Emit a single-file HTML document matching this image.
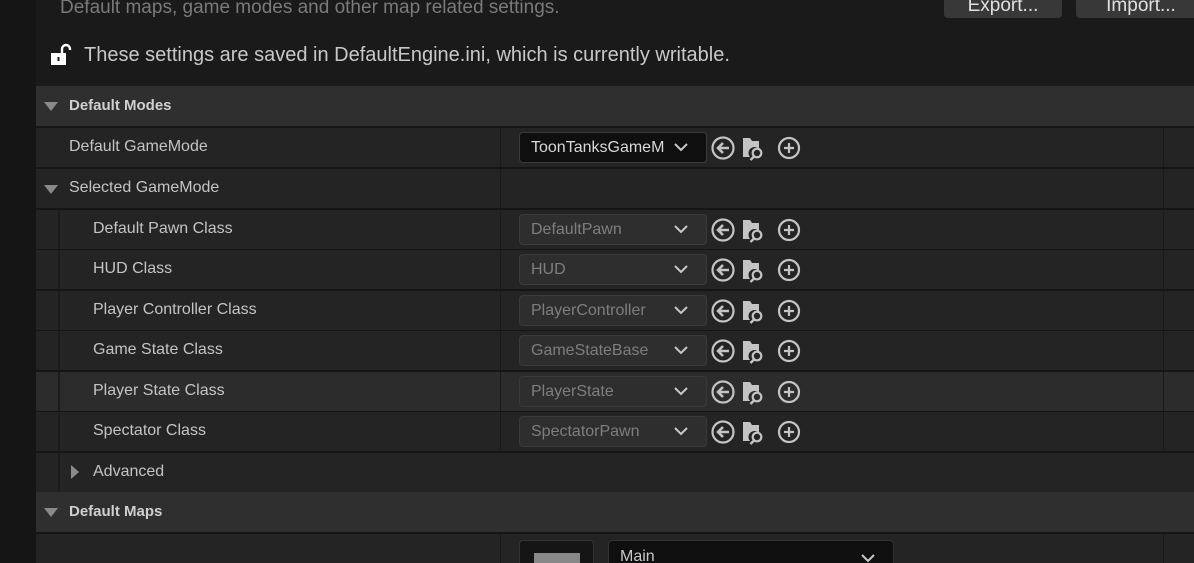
<!DOCTYPE html>
<html><head><style>
*{margin:0;padding:0;box-sizing:border-box}
html,body{width:1194px;height:563px;overflow:hidden}
body{background:#151515;font-family:"Liberation Sans",sans-serif;position:relative;color:#c0c0c0}
.a{position:absolute}
.top{left:36px;top:0;width:1158px;height:86px;background:#1a1a1a}
.hdr{left:36px;width:1158px;height:40px;background:#2f2f2f;font-weight:bold;font-size:15px;color:#d0d0d0}
.row{left:36px;width:1158px;height:39px;background:#242424;overflow:hidden}
.lbl{position:absolute;top:11px;font-size:16px;color:#c4c4c4}
.tri{position:absolute;left:8px;top:16px;width:0;height:0;border-left:7px solid transparent;border-right:7px solid transparent;border-top:9px solid #8a8a8a}
.vd{position:absolute;left:464px;top:0;width:1px;height:100%;background:#1a1a1a}
.vd2{position:absolute;left:1127px;top:0;width:1px;height:100%;background:#1a1a1a}
.ind{position:absolute;left:0;top:0;width:24px;height:100%;background:#242424;border-right:2px solid #1c1c1c}
.dd{position:absolute;left:483px;top:4px;width:188px;height:31px;border-radius:4px;background:#2e2e2e;border:1px solid #3a3a3a;font-size:16px;color:#7e7e7e;padding:6px 0 0 11px}
.dd.on{background:#0f0f0f;color:#d8d8d8;border-color:#3a3a3a}
.dd svg{position:absolute;right:18px;top:10px}
.ic{position:absolute;left:673px;top:6px}
</style></head><body>
<div class="a top">
 <div class="a" style="left:24px;top:-3px;font-size:19px;color:#7a7a7a">Default maps, game modes and other map related settings.</div>
 <div class="a" style="left:908px;top:-10px;width:118px;height:28px;background:#383838;border-radius:4px;color:#e0e0e0;font-size:19px;text-align:center;padding-top:5px">Export...</div>
 <div class="a" style="left:1040px;top:-10px;width:130px;height:28px;background:#383838;border-radius:4px;color:#e0e0e0;font-size:19px;text-align:center;padding-top:5px">Import...</div>
 <svg class="a" style="left:14px;top:43px" width="22" height="23" viewBox="0 0 22 23"><path d="M12 10V6a4 4 0 0 1 8 0v1" fill="none" stroke="#fff" stroke-width="2.4"/><rect x="1" y="10" width="15" height="12" fill="#fff"/><rect x="7.5" y="14" width="2" height="4" fill="#1a1a1a"/></svg>
 <div class="a" style="left:48px;top:44px;font-size:20px;color:#c8c8c8">These settings are saved in DefaultEngine.ini, which is currently writable.</div>
</div>

<svg width="0" height="0" style="position:absolute"><defs>
<g id="icons" fill="none" stroke="#c4c4c4" stroke-width="2.2">
<circle cx="14" cy="14" r="10.5"/><path d="M20 14H9M14 9l-5 5 5 5" stroke-width="2.6"/>
<path d="M34 4h7l2 3h7v8a6 6 0 0 0-9 8h-7z" fill="#c4c4c4" stroke="none"/><circle cx="48" cy="19" r="4.3" stroke-width="2.2"/><path d="M45 22.5L41.5 26" stroke-width="2.4"/>
<circle cx="80" cy="14" r="10"/><path d="M80 9v10M75 14h10"/>
</g>
<path id="chev" d="M1 1l6 6 6-6" fill="none" stroke="#c8c8c8" stroke-width="2"/>
</defs></svg>

<div class="a hdr" style="top:86px"><div class="tri"></div><div class="a" style="left:33px;top:11px">Default Modes</div></div>

<div class="a row" style="top:128px"><div class="lbl" style="left:33px;top:10px">Default GameMode</div><div class="vd"></div><div class="vd2"></div>
 <div class="dd on">ToonTanksGameM<svg width="14" height="9"><use href="#chev"/></svg></div>
 <svg class="ic" width="100" height="28"><use href="#icons"/></svg></div>

<div class="a row" style="top:169px"><div class="tri"></div><div class="lbl" style="left:33px;top:10px">Selected GameMode</div><div class="vd"></div><div class="vd2"></div></div>

<div class="a row" style="top:210px"><div class="ind"></div><div class="lbl" style="left:57px;top:10px">Default Pawn Class</div><div class="vd"></div><div class="vd2"></div>
 <div class="dd">DefaultPawn<svg width="14" height="9"><use href="#chev"/></svg></div><svg class="ic" width="100" height="28"><use href="#icons"/></svg></div>
<div class="a row" style="top:250px"><div class="ind"></div><div class="lbl" style="left:57px;top:10px">HUD Class</div><div class="vd"></div><div class="vd2"></div>
 <div class="dd">HUD<svg width="14" height="9"><use href="#chev"/></svg></div><svg class="ic" width="100" height="28"><use href="#icons"/></svg></div>
<div class="a row" style="top:291px"><div class="ind"></div><div class="lbl" style="left:57px;top:10px">Player Controller Class</div><div class="vd"></div><div class="vd2"></div>
 <div class="dd">PlayerController<svg width="14" height="9"><use href="#chev"/></svg></div><svg class="ic" width="100" height="28"><use href="#icons"/></svg></div>
<div class="a row" style="top:331px"><div class="ind"></div><div class="lbl" style="left:57px;top:10px">Game State Class</div><div class="vd"></div><div class="vd2"></div>
 <div class="dd">GameStateBase<svg width="14" height="9"><use href="#chev"/></svg></div><svg class="ic" width="100" height="28"><use href="#icons"/></svg></div>
<div class="a row" style="top:372px;background:#2c2c2c"><div class="ind" style="background:#2c2c2c"></div><div class="lbl" style="left:57px;top:10px">Player State Class</div><div class="vd"></div><div class="vd2"></div>
 <div class="dd">PlayerState<svg width="14" height="9"><use href="#chev"/></svg></div><svg class="ic" width="100" height="28"><use href="#icons"/></svg></div>
<div class="a row" style="top:412px"><div class="ind"></div><div class="lbl" style="left:57px;top:10px">Spectator Class</div><div class="vd"></div><div class="vd2"></div>
 <div class="dd">SpectatorPawn<svg width="14" height="9"><use href="#chev"/></svg></div><svg class="ic" width="100" height="28"><use href="#icons"/></svg></div>
<div class="a row" style="top:453px"><div class="ind"></div>
 <div class="a" style="left:35px;top:12px;width:0;height:0;border-top:7px solid transparent;border-bottom:7px solid transparent;border-left:8px solid #8a8a8a"></div>
 <div class="lbl" style="left:57px;top:10px">Advanced</div></div>

<div class="a hdr" style="top:492px"><div class="tri"></div><div class="a" style="left:33px;top:11px">Default Maps</div></div>

<div class="a row" style="top:534px;height:29px"><div class="vd"></div><div class="vd2"></div>
 <div class="a" style="left:483px;top:6px;width:75px;height:40px;background:#151515;border:1px solid #333;border-radius:4px"><div class="a" style="left:14px;top:12px;width:46px;height:20px;background:#888"></div></div>
 <div class="a" style="left:572px;top:6px;width:286px;height:30px;background:#0f0f0f;border:1px solid #333;border-radius:4px;font-size:16px;color:#c8c8c8;padding:7px 0 0 11px">Main<svg width="14" height="9" style="position:absolute;right:18px;top:13px"><use href="#chev"/></svg></div>
</div>
</body></html>
